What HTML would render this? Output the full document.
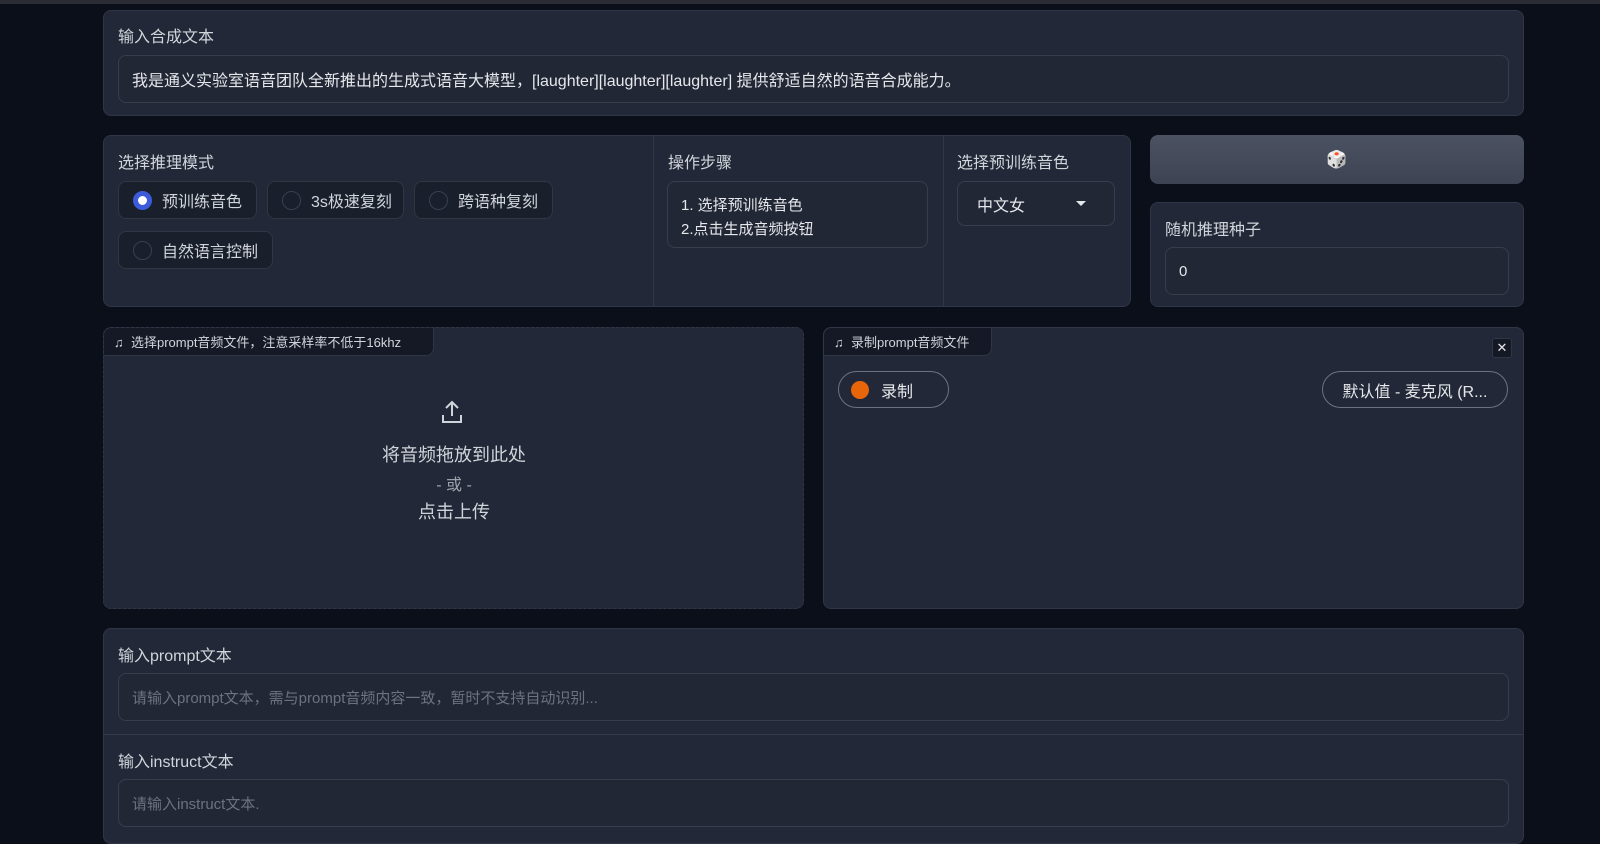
<!DOCTYPE html>
<html><head><meta charset="utf-8"><style>
*{box-sizing:border-box;margin:0;padding:0}
body{width:1600px;height:842px;background:#0b0f19;font-family:"Liberation Sans","Noto Sans CJK SC",sans-serif;color:#e5e7eb;position:relative;overflow:hidden}
.a{position:absolute}
.blk{position:absolute;background:#222837;border:1px solid #2f3645;border-radius:8px}
.lbl{position:absolute;font-size:16px;color:#d1d5db}
.inp{position:absolute;background:#212735;border:1px solid #363e4d;border-radius:8px;font-size:15px;color:#e5e7eb;padding-left:13px;display:flex;align-items:center}
.chip{position:absolute;background:#1a1f2c;border:1px solid #2f3645;border-radius:8px;font-size:16px;color:#d1d5db;display:flex;align-items:center;padding-left:14px}
.rd{width:19px;height:19px;border-radius:50%;background:#1a1f2c;border:1px solid #374151;margin-right:10px}
.rd.on{background:#fff;border:5px solid #3b5bdb}
.ph{color:#6b7280}
</style></head><body>
<div class="a" style="left:0;top:0;width:1600px;height:4px;background:#2a2d33"></div>

<div class="blk" style="left:103px;top:10px;width:1421px;height:106px"></div>
<div class="lbl" style="left:118px;top:23px">输入合成文本</div>
<div class="inp" style="left:118px;top:55px;width:1391px;height:48px;font-size:16px">我是通义实验室语音团队全新推出的生成式语音大模型，[laughter][laughter][laughter] 提供舒适自然的语音合成能力。</div>

<div class="blk" style="left:103px;top:135px;width:1028px;height:172px"></div>
<div class="a" style="left:653px;top:135px;width:1px;height:172px;background:#2f3645"></div>
<div class="a" style="left:943px;top:135px;width:1px;height:172px;background:#2f3645"></div>
<div class="lbl" style="left:118px;top:149px">选择推理模式</div>
<div class="chip" style="left:118px;top:181px;width:139px;height:38px"><span class="rd on"></span>预训练音色</div>
<div class="chip" style="left:267px;top:181px;width:137px;height:38px"><span class="rd"></span>3s极速复刻</div>
<div class="chip" style="left:414px;top:181px;width:139px;height:38px"><span class="rd"></span>跨语种复刻</div>
<div class="chip" style="left:118px;top:231px;width:155px;height:38px"><span class="rd"></span>自然语言控制</div>
<div class="lbl" style="left:668px;top:149px">操作步骤</div>
<div class="inp" style="left:667px;top:181px;width:261px;height:67px;align-items:flex-start;padding-top:12px;line-height:24px;font-size:15px">1. 选择预训练音色<br>2.点击生成音频按钮</div>
<div class="lbl" style="left:957px;top:149px">选择预训练音色</div>
<div class="inp" style="left:957px;top:181px;width:158px;height:45px;font-size:16px;padding-left:19px">中文女<span style="position:absolute;left:118px;top:19px;border-left:5px solid transparent;border-right:5px solid transparent;border-top:5px solid #e5e7eb"></span></div>

<div class="a" style="left:1150px;top:135px;width:374px;height:49px;border-radius:8px;background:linear-gradient(#4b5262,#3d4352);display:flex;align-items:center;justify-content:center;font-size:17px">🎲</div>
<div class="blk" style="left:1150px;top:202px;width:374px;height:105px"></div>
<div class="lbl" style="left:1165px;top:216px">随机推理种子</div>
<div class="inp" style="left:1165px;top:247px;width:344px;height:48px">0</div>

<div class="blk" style="left:103px;top:327px;width:701px;height:282px;border-style:dashed"></div>
<div class="a" style="left:104px;top:328px;width:330px;height:28px;background:#141925;border-right:1px solid #2f3645;border-bottom:1px solid #2f3645;border-radius:8px 0 8px 0;font-size:13px;color:#d1d5db;display:flex;align-items:center;padding-left:10px">♫&nbsp; 选择prompt音频文件，注意采样率不低于16khz</div>
<svg class="a" style="left:440px;top:399px" width="24" height="26" viewBox="0 0 24 26" fill="none" stroke="#d1d5db" stroke-width="2"><path d="M12 17V3M6 9l6-6 6 6M3 16v7h18v-7"/></svg>
<div class="a" style="left:104px;top:441px;width:700px;text-align:center;font-size:18px;color:#d1d5db">将音频拖放到此处</div>
<div class="a" style="left:104px;top:471px;width:700px;text-align:center;font-size:16px;color:#9ca3af">- 或 -</div>
<div class="a" style="left:104px;top:498px;width:700px;text-align:center;font-size:18px;color:#d1d5db">点击上传</div>

<div class="blk" style="left:823px;top:327px;width:701px;height:282px"></div>
<div class="a" style="left:824px;top:328px;width:168px;height:28px;background:#141925;border-right:1px solid #2f3645;border-bottom:1px solid #2f3645;border-radius:8px 0 8px 0;font-size:13px;color:#d1d5db;display:flex;align-items:center;padding-left:10px">♫&nbsp; 录制prompt音频文件</div>
<div class="a" style="left:1492px;top:338px;width:20px;height:20px;background:#141925;border:1px solid #2f3645;border-radius:3px;font-size:13px;text-align:center;line-height:18px">✕</div>
<div class="a" style="left:838px;top:371px;width:111px;height:37px;border:1px solid #6b7280;border-radius:19px;display:flex;align-items:center;padding-left:12px;font-size:16px"><span style="width:18px;height:18px;border-radius:50%;background:#e8650a;margin-right:12px"></span>录制</div>
<div class="a" style="left:1322px;top:371px;width:186px;height:37px;border:1px solid #6b7280;border-radius:19px;display:flex;align-items:center;justify-content:center;font-size:16px">默认值 - 麦克风 (R...</div>

<div class="blk" style="left:103px;top:628px;width:1421px;height:216px"></div>
<div class="a" style="left:103px;top:734px;width:1421px;height:1px;background:#333b4a"></div>
<div class="lbl" style="left:118px;top:642px">输入prompt文本</div>
<div class="inp" style="left:118px;top:673px;width:1391px;height:48px"><span class="ph">请输入prompt文本，需与prompt音频内容一致，暂时不支持自动识别...</span></div>
<div class="lbl" style="left:118px;top:748px">输入instruct文本</div>
<div class="inp" style="left:118px;top:779px;width:1391px;height:48px"><span class="ph">请输入instruct文本.</span></div>
</body></html>
